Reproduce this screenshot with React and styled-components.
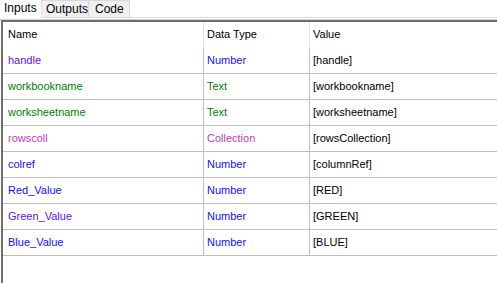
import React from 'react';
import styled, {createGlobalStyle} from 'styled-components';

const Global = createGlobalStyle`
  html, body { margin: 0; padding: 0; background: #fff; }
  body { font-family: "Liberation Sans", Arial, sans-serif; font-size: 11px; }
`;

const Frame = styled.div`
  width: 497px;
  height: 283px;
  overflow: hidden;
  display: flex;
  flex-direction: column;
`;

const TabStrip = styled.div`
  display: flex;
  height: 17px;
  border-bottom: 1px solid #d9d9d9;
`;

const Tab = styled.div`
  height: ${p => (p.active ? '18px' : '17px')};
  line-height: 16px;
  font-size: 12px;
  color: #000;
  box-sizing: border-box;
  background: ${p => (p.active ? '#fff' : '#f0f0f0')};
  border: ${p => (p.active ? 'none' : '1px solid #d9d9d9')};
  border-bottom: none;
  margin-left: ${p => (p.first ? '0' : '-1px')};
  width: ${p => p.w}px;
  padding-left: ${p => p.pl}px;
`;

const Gap = styled.div`
  height: 2px;
  border-bottom: 1px solid #c8d4e0;
  box-sizing: border-box;
`;

const Panel = styled.div`
  flex: 1;
  border-top: 2px solid #6e6e6e;
  border-left: 2px solid #6e6e6e;
  margin-left: 1px;
`;

const Grid = styled.div`
  display: grid;
  grid-template-columns: 200px 106px 1fr;
`;

const HeadCell = styled.div`
  height: 26px;
  line-height: 24px;
  padding-left: ${p => (p.sep ? '3px' : '5px')};
  color: #000;
  border-left: ${p => (p.sep ? '1px solid #e3e3e3' : 'none')};
`;

const Cell = styled.div`
  height: 26px;
  line-height: 25px;
  padding-left: ${p => (p.sep ? '3px' : '5px')};
  box-sizing: border-box;
  border-bottom: 1px solid #bfbfbf;
  border-left: ${p => (p.sep ? '1px solid #bfbfbf' : 'none')};
  color: ${p => p.color || '#000'};
  white-space: nowrap;
`;

const kinds = {
  Number: '#1010ff',
  Text: '#008000',
  Collection: '#c040c0',
};

const rows = [
  ['handle', 'Number', '[handle]', '#5a10ff'],
  ['workbookname', 'Text', '[workbookname]'],
  ['worksheetname', 'Text', '[worksheetname]'],
  ['rowscoll', 'Collection', '[rowsCollection]'],
  ['colref', 'Number', '[columnRef]'],
  ['Red_Value', 'Number', '[RED]'],
  ['Green_Value', 'Number', '[GREEN]', '#5a10ff'],
  ['Blue_Value', 'Number', '[BLUE]'],
];

export default function App() {
  return (
    <Frame>
      <Global />
      <TabStrip>
        <Tab active first w={42} pl={4}>Inputs</Tab>
        <Tab w={48} pl={4}>Outputs</Tab>
        <Tab w={42} pl={6}>Code</Tab>
      </TabStrip>
      <Gap />
      <Panel>
        <Grid>
          <HeadCell>Name</HeadCell>
          <HeadCell sep>Data Type</HeadCell>
          <HeadCell sep>Value</HeadCell>
          {rows.map(([name, type, value, nameColor]) => (
            <React.Fragment key={name}>
              <Cell color={nameColor || kinds[type]}>{name}</Cell>
              <Cell sep color={kinds[type]}>{type}</Cell>
              <Cell sep>{value}</Cell>
            </React.Fragment>
          ))}
        </Grid>
      </Panel>
    </Frame>
  );
}
